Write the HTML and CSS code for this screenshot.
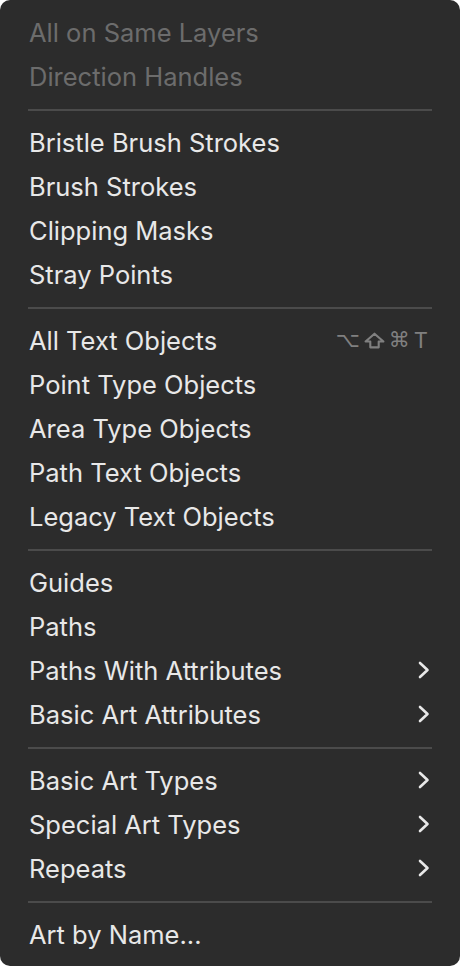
FILE: index.html
```html
<!DOCTYPE html>
<html lang="en">

<head>
    <meta charset="UTF-8" />
    <meta name="viewport" content="width=device-width, initial-scale=1.0" />
    <title>Select Menu</title>
    <link rel="stylesheet" href="styles.css">
</head>

<body>
    <div class="menu">
        <div class="item disabled">All on Same Layers</div>
        <div class="item disabled">Direction Handles</div>
        <div class="separator"></div>
        <div class="item">Bristle Brush Strokes</div>
        <div class="item">Brush Strokes</div>
        <div class="item">Clipping Masks</div>
        <div class="item">Stray Points</div>
        <div class="separator"></div>
        <div class="item">All Text Objects
            <span class="shortcut">
                <span>⌥</span>
                <svg class="shift" viewBox="0 0 20 16"><polygon points="10,1.5 18.5,9 14,9 14,14.5 6,14.5 6,9 1.5,9" /></svg>
                <span>⌘</span>
                <span class="key">T</span>
            </span>
        </div>
        <div class="item">Point Type Objects</div>
        <div class="item">Area Type Objects</div>
        <div class="item">Path Text Objects</div>
        <div class="item">Legacy Text Objects</div>
        <div class="separator"></div>
        <div class="item">Guides</div>
        <div class="item">Paths</div>
        <div class="item">Paths With Attributes <svg class="chevron" viewBox="0 0 12 18"><polyline points="2,2 9.5,9 2,16" /></svg></div>
        <div class="item">Basic Art Attributes <svg class="chevron" viewBox="0 0 12 18"><polyline points="2,2 9.5,9 2,16" /></svg></div>
        <div class="separator"></div>
        <div class="item">Basic Art Types <svg class="chevron" viewBox="0 0 12 18"><polyline points="2,2 9.5,9 2,16" /></svg></div>
        <div class="item">Special Art Types <svg class="chevron" viewBox="0 0 12 18"><polyline points="2,2 9.5,9 2,16" /></svg></div>
        <div class="item">Repeats <svg class="chevron" viewBox="0 0 12 18"><polyline points="2,2 9.5,9 2,16" /></svg></div>
        <div class="separator"></div>
        <div class="item">Art by Name...</div>
    </div>
</body>

</html>
```

FILE: styles.css
```css
body {
    margin: 0;
    background-color: white;
    font-family: Inter, "Noto Sans", sans-serif;
}

.menu {
    height: 966px;
    box-sizing: border-box;
    padding: 10px 28px 10px 29px;
    background-color: #2c2c2c;
    border-radius: 10px;
    display: flex;
    flex-direction: column;
}

.item {
    height: 44px;
    display: flex;
    align-items: center;
    justify-content: space-between;
    font-size: 25.5px;
    color: #e8e8e8;
}

.item.disabled {
    color: #6c6c6c;
}

.separator {
    height: 2px;
    margin: 11px 0 9px -1px;
    background-color: #4b4b4b;
}

.shortcut {
    display: flex;
    align-items: center;
    gap: 4px;
    margin-right: 4px;
    font-family: "DejaVu Sans", sans-serif;
    font-size: 21px;
    color: #808080;
}

.shortcut .key {
    font-family: Inter, sans-serif;
    font-size: 22px;
}

.shift {
    width: 21px;
    height: 17px;
    fill: none;
    stroke: #808080;
    stroke-width: 2;
    stroke-linejoin: round;
}

.chevron {
    width: 12px;
    height: 18px;
    margin-right: 2px;
    fill: none;
    stroke: #e8e8e8;
    stroke-width: 2.6;
    stroke-linecap: round;
    stroke-linejoin: round;
}
```
